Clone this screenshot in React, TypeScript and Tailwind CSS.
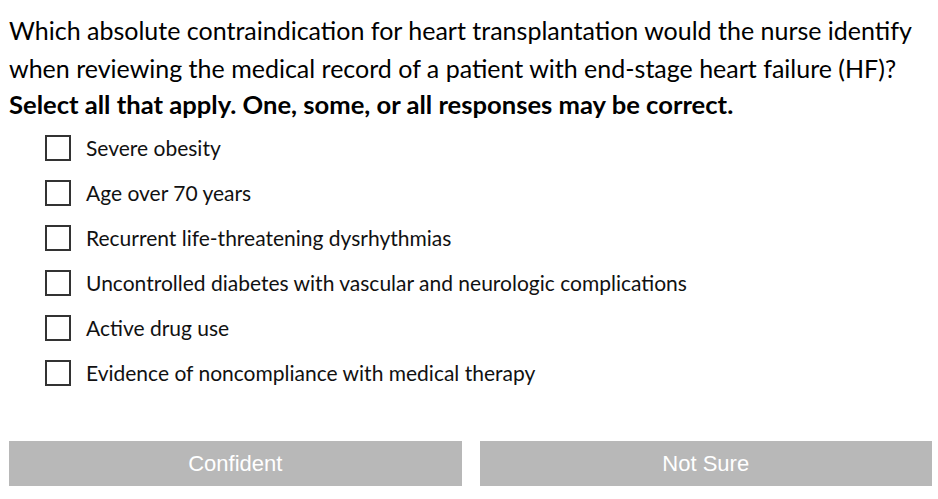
import React from 'react';

const options = [
  'Severe obesity',
  'Age over 70 years',
  'Recurrent life-threatening dysrhythmias',
  'Uncontrolled diabetes with vascular and neurologic complications',
  'Active drug use',
  'Evidence of noncompliance with medical therapy',
];

export default function App() {
  return (
    <div className="w-[938px] h-[499px] bg-white overflow-hidden" style={{ fontFamily: 'Lato, "Noto Sans", sans-serif' }}>
      {/* Question stem */}
      <div className="pt-[11px] pl-[9px] pr-2">
        <p className="text-[25px] leading-[38px] text-black">
          Which absolute contraindication for heart transplantation would the nurse identify when reviewing the medical record of a patient with end-stage heart failure (HF)?
        </p>
        <p className="text-[25.6px] leading-[35px] font-bold text-black">
          Select all that apply. One, some, or all responses may be correct.
        </p>
      </div>

      {/* Options */}
      <ul className="mt-[13px] pl-[45px] flex flex-col gap-[19px]">
        {options.map((o) => (
          <li key={o} className="flex items-center h-[26px]">
            <span className="w-[26px] h-[26px] border-2 border-[#333] bg-white shrink-0" />
            <span className="ml-[15px] text-[21px] text-[#111]">{o}</span>
          </li>
        ))}
      </ul>

      {/* Confidence buttons */}
      <div className="mt-[55px] pl-[9px] pr-[6px] flex gap-[18px]">
        <button className="flex-1 h-[45px] bg-[#b8b8b8] text-white text-[22px]" style={{ fontFamily: '"Liberation Sans", Arial, sans-serif' }}>
          Confident
        </button>
        <button className="flex-1 h-[45px] bg-[#b8b8b8] text-white text-[22px]" style={{ fontFamily: '"Liberation Sans", Arial, sans-serif' }}>
          Not Sure
        </button>
      </div>
    </div>
  );
}
